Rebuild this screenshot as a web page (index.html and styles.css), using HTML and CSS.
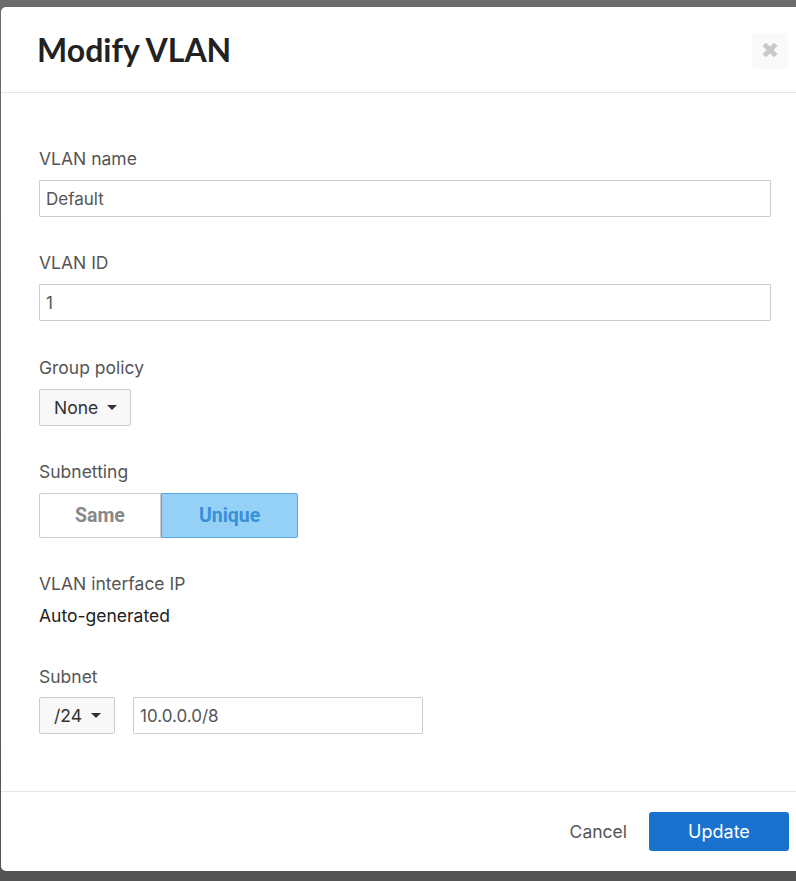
FILE: index.html
```html
<!DOCTYPE html>
<html lang="en">
<head>
<meta charset="utf-8">
<title>Modify VLAN</title>
<link rel="stylesheet" href="styles.css">
</head>
<body>
<div class="modal">
  <div class="modal-header">
    <h1 class="modal-title">Modify VLAN</h1>
    <button class="close-btn" type="button" aria-label="Close">&#x2716;</button>
  </div>
  <div class="modal-body">
    <div class="field">
      <label class="field-label">VLAN name</label>
      <input class="text-input" type="text" value="Default">
    </div>
    <div class="field field-id">
      <label class="field-label">VLAN ID</label>
      <input class="text-input" type="text" value="1">
    </div>
    <div class="field">
      <label class="field-label">Group policy</label>
      <button class="dropdown" type="button"><span>None</span><span class="caret"></span></button>
    </div>
    <div class="field">
      <label class="field-label">Subnetting</label>
      <div class="segmented">
        <button class="segment" type="button">Same</button>
        <button class="segment segment-active" type="button">Unique</button>
      </div>
    </div>
    <div class="field field-static">
      <label class="field-label">VLAN interface IP</label>
      <div class="static-value">Auto-generated</div>
    </div>
    <div class="field field-last">
      <label class="field-label">Subnet</label>
      <div class="subnet-row">
        <button class="dropdown dropdown-small" type="button"><span>/24</span><span class="caret"></span></button>
        <input class="text-input subnet-input" type="text" value="10.0.0.0/8">
      </div>
    </div>
  </div>
  <div class="modal-footer">
    <button class="btn-link" type="button">Cancel</button>
    <button class="btn-primary" type="button">Update</button>
  </div>
</div>
</body>
</html>
```

FILE: styles.css
```css
html, body {
  margin: 0;
  padding: 0;
}
body {
  width: 796px;
  height: 881px;
  overflow: hidden;
  background: linear-gradient(#6c6c6c, #535353);
  font-family: "Inter", "Noto Sans", sans-serif;
}
.modal {
  margin: 7px 0 0 1px;
  width: 808px;
  height: 864px;
  background: #ffffff;
  border-radius: 5px;
  display: flex;
  flex-direction: column;
  box-sizing: border-box;
}
.modal-header {
  height: 85px;
  border-bottom: 1px solid #e6e6e6;
  display: flex;
  align-items: center;
  justify-content: space-between;
  padding: 0 21px 0 36px;
  box-sizing: content-box;
  flex: none;
}
.modal-title {
  margin: 0;
  font-family: "Lato", "Inter", sans-serif;
  font-weight: 700;
  font-size: 32px;
  color: #222222;
}
.close-btn {
  width: 36px;
  height: 36px;
  border: none;
  background: #fafafa;
  border-radius: 3px;
  color: #c8c8c8;
  font-size: 22px;
  line-height: 36px;
  padding: 0;
  margin-top: 2px;
  font-family: "DejaVu Sans", sans-serif;
}
.modal-body {
  flex: 1;
  padding: 56px 38px 0 38px;
}
.field {
  margin-bottom: 36px;
}
.field-id {
  margin-bottom: 37px;
}
.field-label {
  display: block;
  font-size: 17.5px;
  line-height: 20px;
  color: #555555;
  margin-bottom: 11px;
}
.text-input {
  display: block;
  width: 100%;
  height: 37px;
  box-sizing: border-box;
  border: 1px solid #cccccc;
  border-radius: 1px;
  padding: 0 6px;
  font-family: "Inter", "Noto Sans", sans-serif;
  font-size: 17px;
  color: #555555;
  background: #ffffff;
}
.dropdown {
  height: 37px;
  box-sizing: border-box;
  border: 1px solid #cccccc;
  border-radius: 2px;
  background: #f8f8f8;
  padding: 0 13px 0 14px;
  display: inline-flex;
  align-items: center;
  gap: 9px;
  font-family: "Inter", "Noto Sans", sans-serif;
  font-size: 17.5px;
  color: #333333;
}
.caret {
  width: 0;
  height: 0;
  border-left: 5.5px solid transparent;
  border-right: 5.5px solid transparent;
  border-top: 5px solid #333333;
}
.segmented {
  display: flex;
}
.segment {
  height: 45px;
  box-sizing: border-box;
  border: 1px solid #cccccc;
  background: #ffffff;
  padding: 0 35px;
  font-family: "Roboto", "Liberation Sans", sans-serif;
  font-weight: 700;
  font-size: 19.5px;
  color: #888888;
  border-radius: 2px 0 0 2px;
}
.segment-active {
  padding: 0 37px;
  background: #95d1f7;
  border-color: #5aa5df;
  color: #3a8fd9;
  border-radius: 0 2px 2px 0;
}
.field-static .static-value {
  font-size: 17.5px;
  line-height: 20px;
  color: #222222;
}
.field-static .field-label {
  margin-bottom: 12px;
}
.field-static {
  margin-bottom: 41px;
}
.field-last {
  margin-bottom: 0;
}
.field-last .field-label {
  margin-bottom: 10px;
}
.subnet-row {
  display: flex;
  gap: 18px;
}
.subnet-input {
  width: 290px;
}
.modal-footer {
  border-top: 1px solid #e6e6e6;
  height: 80px;
  flex: none;
  display: flex;
  align-items: center;
  justify-content: flex-end;
  padding: 0 20px 1px 0;
  gap: 22px;
  box-sizing: border-box;
}
.btn-link {
  border: none;
  background: none;
  font-family: "Inter", "Noto Sans", sans-serif;
  font-size: 17.5px;
  color: #555555;
  padding: 0;
}
.btn-primary {
  width: 140px;
  height: 39px;
  border: none;
  border-radius: 3px;
  background: #1a72cf;
  color: #ffffff;
  font-family: "Inter", "Noto Sans", sans-serif;
  font-size: 18px;
}
```
